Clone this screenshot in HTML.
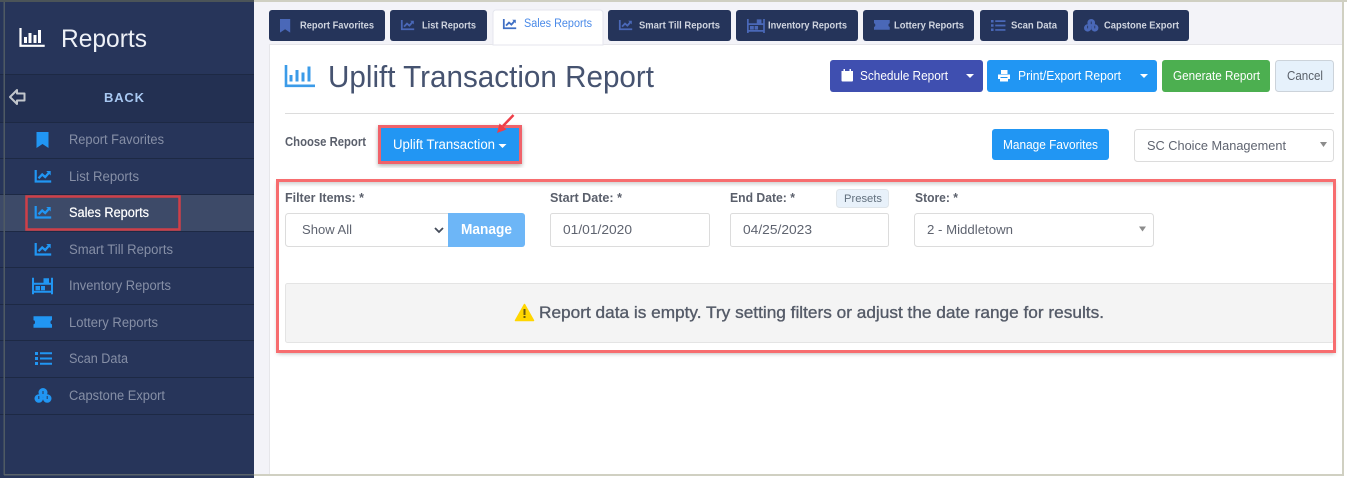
<!DOCTYPE html>
<html><head><meta charset="utf-8"><style>
html,body{margin:0;padding:0;background:#fff;width:1347px;height:478px;overflow:hidden}
svg{display:block;position:absolute;left:0;top:0}
text{font-family:"Liberation Sans",sans-serif}
.s{font-size:13.500px;fill:#868fa6}
.t{font-size:10.500px;font-weight:bold;fill:#cfd4df}
.l{font-size:12.500px;font-weight:bold;fill:#5a5f6b}
.v{font-size:13px;fill:#5f6470}
.w{font-size:13px;fill:#fff}
</style></head><body>
<svg width="1347" height="478" viewBox="0 0 1347 478" xmlns="http://www.w3.org/2000/svg">
<defs>
<g id="line"><path d="M1 0V11.500H16.500" fill="none" stroke="currentColor" stroke-width="2.200"/><path d="M3.800 8.300L7.500 4.500L10.500 7L14.500 2.500" fill="none" stroke="currentColor" stroke-width="2.300"/><path d="M11.500 1H16V5.500Z" fill="currentColor"/></g>
<g id="mark"><path d="M0 0H12V16L6 12L0 16Z" fill="currentColor"/></g>
<g id="inv"><path d="M1 0V16.500M20 0V16.500M1 14H20M1 6H20" fill="none" stroke="currentColor" stroke-width="2"/><path d="M3.500 8.300H8V12.500H3.500ZM9 8.300H13V12.500H9ZM11.500 0.500H17V5.500H11.500Z" fill="currentColor"/></g>
<g id="tick"><path d="M0 0H18.500V4A1.500 2 0 0 0 18.500 8V11.500H0V8A1.500 2 0 0 0 0 4Z" fill="currentColor"/></g>
<g id="list"><path d="M0 0H3V3H0ZM0 5H3V8H0ZM0 10H3V13H0Z" fill="currentColor"/><path d="M5 1.300H17M5 6.500H17M5 11.700H17" stroke="currentColor" stroke-width="2"/></g>
<g id="cube"><circle cx="8.500" cy="4.500" r="4.500" fill="currentColor"/><circle cx="4.300" cy="10.500" r="4.300" fill="currentColor"/><circle cx="12.700" cy="10.500" r="4.300" fill="currentColor"/><path d="M4.300 8V11M12.700 8V11M8.500 3V6" stroke="#27355a" stroke-width="1"/></g>
<filter id="sh" x="-5%" y="-10%" width="110%" height="125%"><feDropShadow dx="0" dy="2" stdDeviation="2" flood-color="#000" flood-opacity=".3"/></filter>
<linearGradient id="ig" x1="0" y1="0" x2="0" y2="1"><stop offset="0" stop-color="#000" stop-opacity=".16"/><stop offset="1" stop-color="#000" stop-opacity="0"/></linearGradient>
</defs>

<!-- backgrounds -->
<rect width="1347" height="478" fill="#fff"/>
<rect x="254" y="0" width="1089" height="476" fill="#f3f3f8"/>
<rect x="270" y="44" width="1072" height="431" fill="#fff"/>
<rect x="269" y="44" width="1" height="431" fill="#e6e6ea"/>
<rect x="270" y="44" width="1072" height="1" fill="#e6e6ea"/>
<rect x="0" y="0" width="1347" height="2" fill="#cfcfc2"/>
<rect x="1342" y="0" width="2" height="476" fill="#d0d0c2"/>
<rect x="254" y="474" width="1090" height="2" fill="#d0d0c2"/>

<!-- sidebar -->
<rect x="0" y="0" width="254" height="478" fill="#27355a"/>
<rect x="0" y="74" width="254" height="48" fill="#233052"/>
<rect x="0" y="195" width="254" height="36" fill="#3d4a68"/>
<g fill="#1d2944"><rect y="74" width="254" height="1"/><rect y="122" width="254" height="1"/><rect y="158" width="254" height="1"/><rect y="194" width="254" height="1"/><rect y="231" width="254" height="1"/><rect y="267" width="254" height="1"/><rect y="304" width="254" height="1"/><rect y="340" width="254" height="1"/><rect y="377" width="254" height="1"/><rect y="414" width="254" height="1"/></g>
<rect x="0" y="0" width="254" height="2" fill="#4b5458"/>
<rect x="3.500" y="2" width="1.500" height="473" fill="#4f5a64"/>
<rect x="4" y="474" width="250" height="1.500" fill="#59626a"/>
<rect x="0" y="476" width="254" height="2" fill="#27355a"/>

<path d="M20.500 28V45.800H44.700" fill="none" stroke="#fff" stroke-width="2.200"/>
<path d="M24 37H27V43H24ZM28.500 33H31.500V43H28.500ZM33.500 35H36.500V43H33.500ZM38 30H41V43H38Z" fill="#fff"/>
<text x="61" y="47" font-size="25" fill="#eef1f7" textLength="86" lengthAdjust="spacingAndGlyphs">Reports</text>
<path d="M10 97L17 90V93.500H24.500V100.500H17V104Z" fill="none" stroke="#c2c6cc" stroke-width="2" stroke-linejoin="round"/>
<text x="104" y="102" font-size="13" font-weight="bold" fill="#a8c8f2" textLength="40">BACK</text>

<g style="color:#2196f3">
<use href="#mark" x="36.500" y="132"/>
<use href="#line" x="34.700" y="170"/>
<use href="#line" x="34.700" y="206"/>
<use href="#line" x="34.700" y="243"/>
<use href="#inv" x="32" y="277.700"/>
<use href="#tick" x="33.500" y="316.200"/>
<use href="#list" x="35" y="352"/>
<use href="#cube" x="34.500" y="388"/>
</g>
<text class="s" x="69" y="144" textLength="95" lengthAdjust="spacingAndGlyphs">Report Favorites</text>
<text class="s" x="69" y="181" textLength="70" lengthAdjust="spacingAndGlyphs">List Reports</text>
<text class="s" x="69" y="217" textLength="80" lengthAdjust="spacingAndGlyphs" style="fill:#fff;stroke:#fff;stroke-width:.2px">Sales Reports</text>
<text class="s" x="69" y="254" textLength="104" lengthAdjust="spacingAndGlyphs">Smart Till Reports</text>
<text class="s" x="69" y="290" textLength="102" lengthAdjust="spacingAndGlyphs">Inventory Reports</text>
<text class="s" x="69" y="327" textLength="89" lengthAdjust="spacingAndGlyphs">Lottery Reports</text>
<text class="s" x="69" y="363" textLength="59" lengthAdjust="spacingAndGlyphs">Scan Data</text>
<text class="s" x="69" y="400" textLength="96" lengthAdjust="spacingAndGlyphs">Capstone Export</text>
<rect x="26.500" y="196.500" width="153" height="33" fill="none" stroke="#cf3f48" stroke-width="2.500"/>

<!-- tabs -->
<g fill="#25345a">
<rect x="269" y="10" width="116" height="31" rx="3"/>
<rect x="390" y="10" width="97" height="31" rx="3"/>
<rect x="608" y="10" width="123" height="31" rx="3"/>
<rect x="736" y="10" width="122" height="31" rx="3"/>
<rect x="863" y="10" width="111" height="31" rx="3"/>
<rect x="980" y="10" width="88" height="31" rx="3"/>
<rect x="1073" y="10" width="116" height="31" rx="3"/>
</g>
<path d="M493 45V13A3 3 0 0 1 496 10H600A3 3 0 0 1 603 13V45Z" fill="#fff" stroke="#e4e6ee" stroke-width="1"/>
<g style="color:#4a68b8">
<use href="#mark" transform="translate(280 19) scale(.85)"/>
<use href="#line" transform="translate(401 20) scale(.8)"/>
<use href="#line" transform="translate(503 19) scale(.8)" style="color:#3f6fc4"/>
<use href="#line" transform="translate(619 20) scale(.8)"/>
<use href="#inv" transform="translate(747 19) scale(.85)"/>
<use href="#tick" transform="translate(874 20) scale(.85)"/>
<use href="#list" transform="translate(991 20) scale(.85)"/>
<use href="#cube" transform="translate(1084 19) scale(.85)"/>
</g>
<text class="t" x="300" y="28.500" textLength="74" lengthAdjust="spacingAndGlyphs">Report Favorites</text>
<text class="t" x="422" y="28.500" textLength="54" lengthAdjust="spacingAndGlyphs">List Reports</text>
<text x="524" y="27" font-size="11.500" fill="#4a8ae8" textLength="68" lengthAdjust="spacingAndGlyphs">Sales Reports</text>
<text class="t" x="639" y="28.500" textLength="81" lengthAdjust="spacingAndGlyphs">Smart Till Reports</text>
<text class="t" x="768" y="28.500" textLength="79" lengthAdjust="spacingAndGlyphs">Inventory Reports</text>
<text class="t" x="894" y="28.500" textLength="70" lengthAdjust="spacingAndGlyphs">Lottery Reports</text>
<text class="t" x="1011" y="28.500" textLength="46" lengthAdjust="spacingAndGlyphs">Scan Data</text>
<text class="t" x="1104" y="28.500" textLength="75" lengthAdjust="spacingAndGlyphs">Capstone Export</text>

<!-- title -->
<path d="M286 65V85.800H315" fill="none" stroke="#3b9be8" stroke-width="2.600"/>
<path d="M289.500 75H292.500V81.500H289.500ZM295.500 70H298.500V81.500H295.500ZM301.500 72.500H304.500V81.500H301.500ZM307.500 66.500H310.500V81.500H307.500Z" fill="#3b9be8"/>
<text x="328" y="87" font-size="31" fill="#465370" textLength="326" lengthAdjust="spacingAndGlyphs">Uplift Transaction Report</text>

<!-- action buttons -->
<rect x="830" y="60" width="153" height="32" rx="3" fill="#3f4fb0"/>
<rect x="987" y="60" width="170" height="32" rx="3" fill="#2196f3"/>
<rect x="1162" y="60" width="108" height="32" rx="3" fill="#4caf50"/>
<rect x="1275.500" y="60.500" width="58" height="31" rx="3" fill="#e6f1fb" stroke="#ccd3da"/>
<path d="M841.500 71H853V80.500A1 1 0 0 1 852 81.500H842.500A1 1 0 0 1 841.500 80.500ZM843.500 69H845V71H843.500ZM849.500 69H851V71H849.500Z" fill="#fff"/>
<path d="M1001 70H1007.500V74H1001ZM998 74.500H1010V79H1008V81.500H1000V79H998Z" fill="#fff"/>
<rect x="1000.500" y="77" width="7" height="1" fill="#2196f3"/>
<path d="M966 74H974L970 78ZM1140 74H1148L1144 78Z" fill="#fff"/>
<text class="w" x="860" y="80" textLength="88" lengthAdjust="spacingAndGlyphs">Schedule Report</text>
<text class="w" x="1018" y="80" textLength="103" lengthAdjust="spacingAndGlyphs">Print/Export Report</text>
<text class="w" x="1173" y="80" textLength="87" lengthAdjust="spacingAndGlyphs">Generate Report</text>
<text x="1287" y="80" font-size="13" fill="#596069" textLength="36" lengthAdjust="spacingAndGlyphs">Cancel</text>

<rect x="285" y="113" width="1049" height="1" fill="#dcdcdc"/>

<!-- choose row -->
<text class="l" x="285" y="146" textLength="81" lengthAdjust="spacingAndGlyphs">Choose Report</text>
<rect x="379.500" y="126.500" width="141" height="36" fill="#2196f3" stroke="#f0626a" stroke-width="3" filter="url(#sh)"/>
<text x="393" y="149" font-size="13.500" fill="#fff" textLength="102" lengthAdjust="spacingAndGlyphs">Uplift Transaction</text>
<path d="M498.500 144H506.500L502.500 148Z" fill="#fff"/>
<path d="M513.500 115L503 126" stroke="#ee3f48" stroke-width="2.500"/>
<path d="M497 133L499.500 123.500L506.500 129.500Z" fill="#ee3f48"/>
<rect x="992" y="129" width="117" height="31" rx="3" fill="#2196f3"/>
<text class="w" x="1003" y="149" textLength="95" lengthAdjust="spacingAndGlyphs">Manage Favorites</text>
<rect x="1134.500" y="129.500" width="199" height="32" rx="3" fill="#fff" stroke="#dcdcdc"/>
<text class="v" x="1147" y="150" textLength="139" lengthAdjust="spacingAndGlyphs">SC Choice Management</text>
<path d="M1320 142H1327L1323.500 147Z" fill="#8c8c8c"/>

<!-- filter panel -->
<rect x="277.500" y="180.500" width="1057" height="171" fill="#fff" filter="url(#sh)"/>
<rect x="279" y="182" width="1054" height="5" fill="url(#ig)"/>
<text class="l" x="285" y="202" textLength="79" lengthAdjust="spacingAndGlyphs">Filter Items: *</text>
<text class="l" x="550" y="202" textLength="72" lengthAdjust="spacingAndGlyphs">Start Date: *</text>
<text class="l" x="730" y="202" textLength="65" lengthAdjust="spacingAndGlyphs">End Date: *</text>
<text class="l" x="915" y="202" textLength="43" lengthAdjust="spacingAndGlyphs">Store: *</text>
<rect x="836.500" y="189.500" width="52" height="18" rx="3" fill="#e8f1fa" stroke="#dfe5ea"/>
<text x="844" y="202" font-size="11" fill="#62707e" textLength="38" lengthAdjust="spacingAndGlyphs">Presets</text>

<rect x="285.500" y="213.500" width="170" height="33" rx="3" fill="#fff" stroke="#dcdcdc"/>
<path d="M448 213H522A3 3 0 0 1 525 216V244A3 3 0 0 1 522 247H448Z" fill="#6db6f7"/>
<text class="v" x="302" y="234" textLength="50" lengthAdjust="spacingAndGlyphs">Show All</text>
<path d="M435 228L439 232L443 228" fill="none" stroke="#444c5a" stroke-width="1.800"/>
<text x="461" y="234" font-size="14.500" font-weight="bold" fill="#fff" textLength="51" lengthAdjust="spacingAndGlyphs">Manage</text>
<rect x="550.500" y="213.500" width="159" height="33" rx="2" fill="#fff" stroke="#dcdcdc"/>
<text class="v" x="563" y="234" textLength="69" lengthAdjust="spacingAndGlyphs">01/01/2020</text>
<rect x="730.500" y="213.500" width="158" height="33" rx="2" fill="#fff" stroke="#dcdcdc"/>
<text class="v" x="743" y="234" textLength="69" lengthAdjust="spacingAndGlyphs">04/25/2023</text>
<rect x="914.500" y="213.500" width="239" height="33" rx="3" fill="#fff" stroke="#dcdcdc"/>
<text class="v" x="927" y="234" textLength="86" lengthAdjust="spacingAndGlyphs">2 - Middletown</text>
<path d="M1139 226.500H1146L1142.500 231.500Z" fill="#8c8c8c"/>

<rect x="285.500" y="283.500" width="1048" height="59" rx="2" fill="#f4f4f4" stroke="#e4e4e4"/>
<path d="M524.500 304.500L533.500 320.500H515.500Z" fill="#ffd600" stroke="#ffd600" stroke-width="1.500" stroke-linejoin="round"/>
<rect x="523.500" y="309" width="2" height="6" fill="#6a5a10"/><rect x="523.500" y="316" width="2" height="2" fill="#6a5a10"/>
<text x="539" y="318" font-size="17" fill="#555b68" textLength="565" lengthAdjust="spacingAndGlyphs" style="stroke:#555b68;stroke-width:.35px">Report data is empty. Try setting filters or adjust the date range for results.</text>
<rect x="277.500" y="180.500" width="1057" height="171" fill="none" stroke="#f76d6f" stroke-width="3"/>
</svg>
</body></html>
